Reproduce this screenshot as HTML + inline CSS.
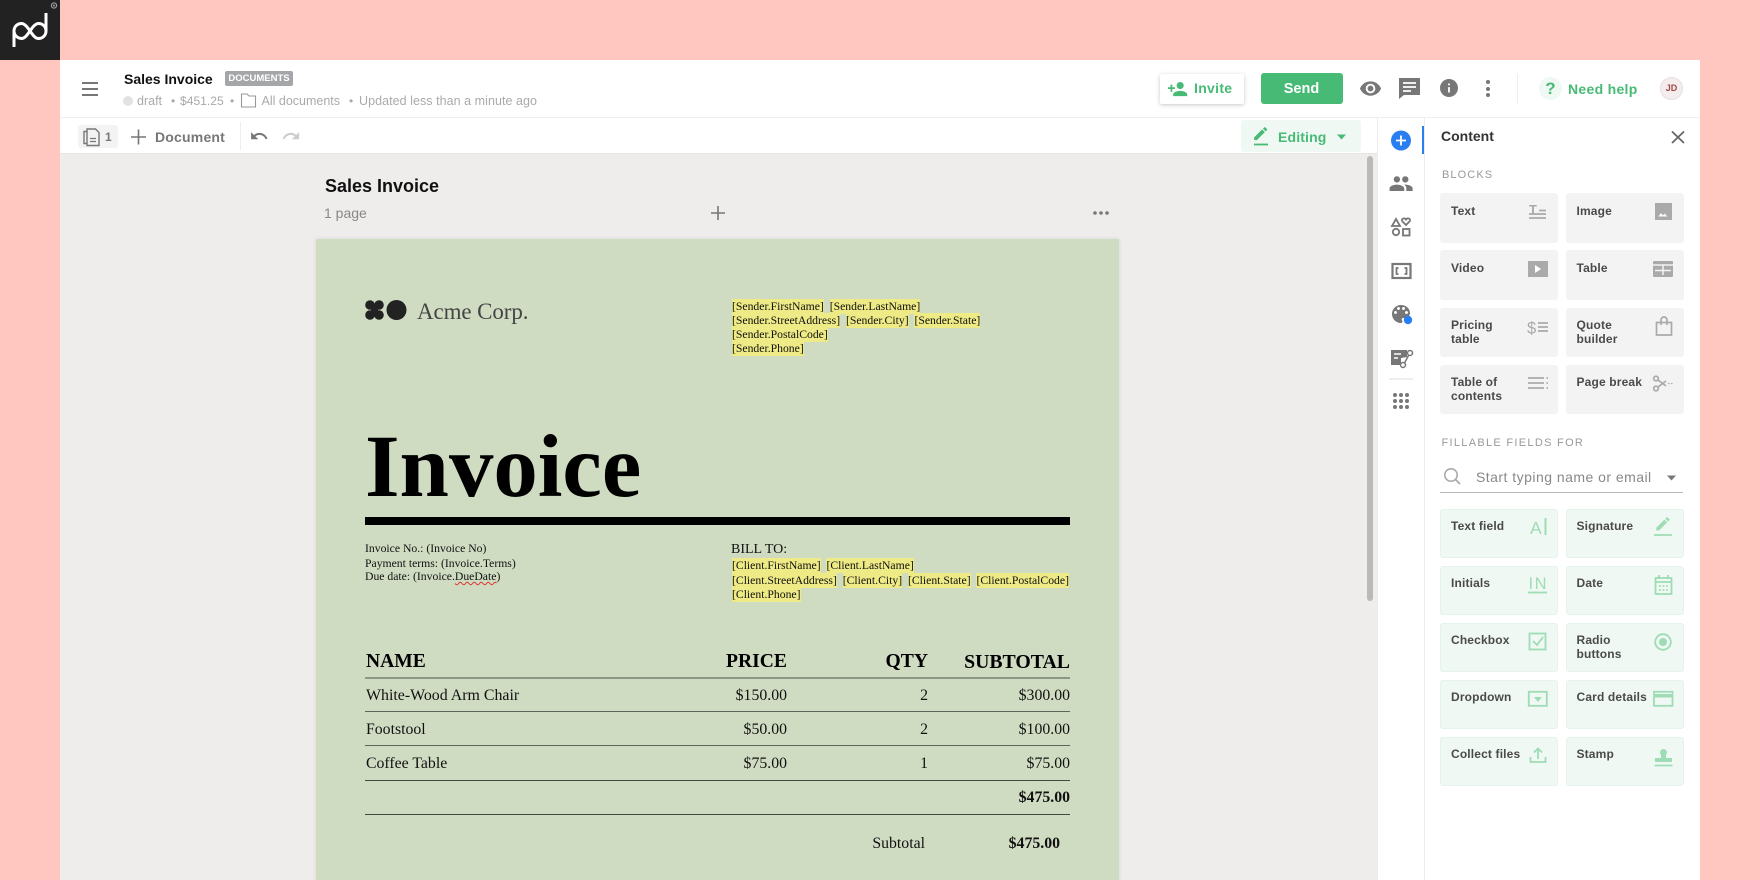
<!DOCTYPE html>
<html><head><meta charset="utf-8"><title>Sales Invoice</title>
<style>
html,body{margin:0;padding:0;width:1760px;height:880px;overflow:hidden;background:#ffc7bf;font-family:"Liberation Sans",sans-serif}
div,span.a{position:absolute;white-space:nowrap}
.t{line-height:14px;font-size:12px;font-weight:700;color:#4a4a4a;letter-spacing:.15px}
.b{background:#f3f3f3;border-radius:3px;width:118px}
.f{background:#eff8f3;box-shadow:inset 0 0 0 1px #e5f4eb;border-radius:3px;width:118px}
.s{font-family:"Liberation Serif",serif;color:#111}
.h{background:#eeea85;padding:1px 0}
.sl{font-size:11.7px;line-height:14px}
.r{font-size:15.8px;line-height:18px;text-align:right}
.rule{left:365px;width:705px;height:1px;background:#3f4a3c}
</style></head><body>
<div style="left:0;top:0;width:60px;height:60px;background:#222"></div>
<div style="left:60px;top:60px;width:1640px;height:820px;background:#fff"></div>
<div style="left:60px;top:154px;width:1317px;height:726px;background:#eeedeb"></div>
<div style="left:60px;top:117px;width:1640px;height:1px;background:#f0f0f0"></div>
<div style="left:60px;top:153px;width:1317px;height:1px;background:#e6e6e6"></div>
<div style="left:1377px;top:117px;width:1px;height:763px;background:#ececec"></div>
<div style="left:1424px;top:118px;width:1px;height:762px;background:#ececec"></div>
<div style="left:1367px;top:156px;width:6px;height:445px;background:#b9b9b7;border-radius:3px"></div>

<!-- header -->
<div style="left:124px;top:71px;font-size:14px;line-height:16px;font-weight:700;color:#111">Sales Invoice</div>
<div style="left:225px;top:71px;width:68px;height:15px;background:#a5a6aa;border-radius:2px;color:#fff;font-size:9.5px;font-weight:700;line-height:15px;text-align:center">DOCUMENTS</div>
<div style="left:123px;top:96px;width:10px;height:10px;border-radius:50%;background:#e2e2e2"></div>
<div style="left:137px;top:94px;font-size:12.5px;line-height:14px;color:#aaa">draft</div>
<div style="left:171px;top:94px;font-size:12px;line-height:14px;color:#aaa">•</div>
<div style="left:180px;top:94px;font-size:12.1px;line-height:14px;color:#aaa">$451.25</div>
<div style="left:230px;top:94px;font-size:12px;line-height:14px;color:#aaa">•</div>
<div style="left:261.500px;top:94px;font-size:12.5px;line-height:14px;color:#aaa">All documents</div>
<div style="left:349px;top:94px;font-size:12px;line-height:14px;color:#aaa">•</div>
<div style="left:359px;top:94px;font-size:12.5px;line-height:14px;color:#aaa;letter-spacing:.05px">Updated less than a minute ago</div>

<!-- toolbar -->
<div style="left:78px;top:125px;width:40px;height:23px;background:#f3f3f3;border-radius:3px"></div>
<div style="left:105px;top:130px;font-size:12px;line-height:14px;font-weight:700;color:#777">1</div>
<div style="left:155px;top:129px;font-size:14px;line-height:16px;font-weight:700;color:#777;letter-spacing:.2px">Document</div>
<div style="left:240px;top:122px;width:1px;height:28px;background:#eee"></div>

<!-- right header -->
<div style="left:1160px;top:74px;width:84px;height:30px;background:#fff;border-radius:2px;box-shadow:0 1px 4px rgba(0,0,0,.22)"></div>
<div style="left:1194px;top:80px;font-size:14px;line-height:16px;font-weight:700;color:#47ba75;letter-spacing:.3px">Invite</div>
<div style="left:1260.500px;top:73px;width:82px;height:31px;background:#47ba75;border-radius:3px;color:#fff;font-size:14.500px;font-weight:700;line-height:33px;text-align:center">Send</div>
<div style="left:1517px;top:74px;width:1px;height:29px;background:#eee"></div>
<div style="left:1539px;top:77px;width:23px;height:23px;background:#eff8f3;border-radius:50%;color:#47ba75;font-size:17px;font-weight:700;line-height:23px;text-align:center">?</div>
<div style="left:1568px;top:81px;font-size:14px;line-height:16px;font-weight:700;color:#47ba75;letter-spacing:.3px">Need help</div>
<div style="left:1660px;top:77px;width:23px;height:23px;background:#f5eded;box-shadow:inset 0 0 0 1px #e4e0e0;border-radius:50%;color:#9c4a4a;font-size:9px;font-weight:700;line-height:23px;text-align:center">JD</div>
<div style="left:1241px;top:120px;width:120px;height:32px;background:#eff8f3;border-radius:3px"></div>
<div style="left:1278px;top:129px;font-size:14px;line-height:16px;font-weight:700;color:#47ba75;letter-spacing:.15px">Editing</div>

<!-- doc heading -->
<div style="left:325px;top:175px;font-size:18px;line-height:22px;font-weight:700;color:#111">Sales Invoice</div>
<div style="left:324px;top:205px;font-size:14px;line-height:16px;color:#888">1 page</div>

<!-- page -->
<div style="left:315.500px;top:239px;width:803.500px;height:641px;background:#d0dcc2;box-shadow:0 0 4px rgba(0,0,0,.1)"></div>
<div style="left:417px;top:298px;font-family:'Liberation Serif',serif;font-size:23px;line-height:28px;color:#444;letter-spacing:-.1px">Acme Corp.</div>

<div class="s sl" style="left:732px;top:300px"><span class="h">[Sender.FirstName]</span>&nbsp; <span class="h">[Sender.LastName]</span></div>
<div class="s sl" style="left:732px;top:314px"><span class="h">[Sender.StreetAddress]</span>&nbsp; <span class="h">[Sender.City]</span>&nbsp; <span class="h">[Sender.State]</span></div>
<div class="s sl" style="left:732px;top:328px"><span class="h">[Sender.PostalCode]</span></div>
<div class="s sl" style="left:732px;top:342px"><span class="h">[Sender.Phone]</span></div>

<div style="left:365px;top:417px;font-family:'Liberation Serif',serif;font-size:88.800px;line-height:100px;font-weight:700;color:#000">Invoice</div>
<div style="left:365px;top:517px;width:705px;height:8px;background:#000"></div>

<div class="s sl" style="left:365px;top:542px">Invoice No.: (Invoice No)</div>
<div class="s sl" style="left:365px;top:556.500px">Payment terms: (Invoice.Terms)</div>
<div class="s sl" style="left:365px;top:570px">Due date: (Invoice.<span style="text-decoration:underline wavy #d33;text-decoration-thickness:1px">DueDate</span>)</div>

<div class="s" style="left:731px;top:541.500px;font-size:14px;line-height:16px">BILL TO:</div>
<div class="s sl" style="left:732px;top:559px"><span class="h">[Client.FirstName]</span>&nbsp; <span class="h">[Client.LastName]</span></div>
<div class="s sl" style="left:732px;top:573.500px"><span class="h">[Client.StreetAddress]</span>&nbsp; <span class="h">[Client.City]</span>&nbsp; <span class="h">[Client.State]</span>&nbsp; <span class="h">[Client.PostalCode]</span></div>
<div class="s sl" style="left:732px;top:587.500px"><span class="h">[Client.Phone]</span></div>

<div class="s" style="left:366px;top:651px;font-size:19.600px;line-height:22px;font-weight:700;color:#000">NAME</div>
<div class="s" style="left:587px;width:200px;text-align:right;top:651px;font-size:19.600px;line-height:22px;font-weight:700;color:#000">PRICE</div>
<div class="s" style="left:728px;width:200px;text-align:right;top:651px;font-size:19.600px;line-height:22px;font-weight:700;color:#000">QTY</div>
<div class="s" style="left:870px;width:200px;text-align:right;top:651px;font-size:19.800px;line-height:22px;font-weight:700;color:#000">SUBTOTAL</div>
<div class="rule" style="top:677px;height:2px;background:#8c9683"></div>
<div class="rule" style="top:711px;background:#5c6656"></div>
<div class="rule" style="top:745px;background:#5c6656"></div>
<div class="rule" style="top:780px"></div>
<div class="rule" style="top:814px"></div>

<div class="s r" style="left:366px;top:687px;font-size:15.9px">White-Wood Arm Chair</div>
<div class="s r" style="left:587px;width:200px;top:687px">$150.00</div>
<div class="s r" style="left:728px;width:200px;top:687px">2</div>
<div class="s r" style="left:870px;width:200px;top:687px">$300.00</div>
<div class="s r" style="left:366px;top:721px">Footstool</div>
<div class="s r" style="left:587px;width:200px;top:721px">$50.00</div>
<div class="s r" style="left:728px;width:200px;top:721px">2</div>
<div class="s r" style="left:870px;width:200px;top:721px">$100.00</div>
<div class="s r" style="left:366px;top:755px">Coffee Table</div>
<div class="s r" style="left:587px;width:200px;top:755px">$75.00</div>
<div class="s r" style="left:728px;width:200px;top:755px">1</div>
<div class="s r" style="left:870px;width:200px;top:755px">$75.00</div>
<div class="s r" style="left:870px;width:200px;top:789px;font-weight:700">$475.00</div>
<div class="s r" style="left:725px;width:200px;top:835px">Subtotal</div>
<div class="s r" style="left:860px;width:200px;top:835px;font-weight:700">$475.00</div>

<!-- panel -->
<div style="left:1441px;top:128px;font-size:14px;line-height:16px;font-weight:700;color:#333">Content</div>
<div style="left:1442px;top:167.500px;font-size:11px;line-height:14px;color:#999;letter-spacing:1.100px">BLOCKS</div>
<div style="left:1441.500px;top:436px;font-size:11px;line-height:14px;color:#999;letter-spacing:1.300px">FILLABLE FIELDS FOR</div>
<div style="left:1476px;top:469px;font-size:14px;line-height:16px;color:#888;letter-spacing:.47px">Start typing name or email</div>
<div style="left:1440px;top:491.500px;width:243px;height:1px;background:#bbb"></div>

<div class="b" style="left:1440px;top:193px;height:50px"></div><div class="b" style="left:1566px;top:193px;height:50px"></div>
<div class="b" style="left:1440px;top:250px;height:50px"></div><div class="b" style="left:1566px;top:250px;height:50px"></div>
<div class="b" style="left:1440px;top:308px;height:49px"></div><div class="b" style="left:1566px;top:308px;height:49px"></div>
<div class="b" style="left:1440px;top:365px;height:49px"></div><div class="b" style="left:1566px;top:365px;height:49px"></div>
<div class="t" style="left:1451px;top:203.500px">Text</div><div class="t" style="left:1576.500px;top:203.500px">Image</div>
<div class="t" style="left:1451px;top:260.500px">Video</div><div class="t" style="left:1576.500px;top:260.500px">Table</div>
<div class="t" style="left:1451px;top:318px">Pricing<br>table</div><div class="t" style="left:1576.500px;top:318px">Quote<br>builder</div>
<div class="t" style="left:1451px;top:375px">Table of<br>contents</div><div class="t" style="left:1576.500px;top:375px">Page break</div>

<div class="f" style="left:1440px;top:509px;height:49px"></div><div class="f" style="left:1566px;top:509px;height:49px"></div>
<div class="f" style="left:1440px;top:566px;height:49px"></div><div class="f" style="left:1566px;top:566px;height:49px"></div>
<div class="f" style="left:1440px;top:623px;height:49px"></div><div class="f" style="left:1566px;top:623px;height:49px"></div>
<div class="f" style="left:1440px;top:680px;height:49px"></div><div class="f" style="left:1566px;top:680px;height:49px"></div>
<div class="f" style="left:1440px;top:737px;height:49px"></div><div class="f" style="left:1566px;top:737px;height:49px"></div>
<div class="t" style="left:1451px;top:519px">Text field</div><div class="t" style="left:1576.500px;top:519px">Signature</div>
<div class="t" style="left:1451px;top:576px">Initials</div><div class="t" style="left:1576.500px;top:576px">Date</div>
<div class="t" style="left:1451px;top:633px">Checkbox</div><div class="t" style="left:1576.500px;top:633px">Radio<br>buttons</div>
<div class="t" style="left:1451px;top:690px">Dropdown</div><div class="t" style="left:1576.500px;top:690px">Card details</div>
<div class="t" style="left:1451px;top:747px">Collect files</div><div class="t" style="left:1576.500px;top:747px">Stamp</div>

<svg width="1760" height="880" viewBox="0 0 1760 880" style="position:absolute;left:0;top:0" fill="none">
<!-- logo -->
<g stroke="#fff" stroke-width="3">
<path d="M14 47V31C14 26 18 23.500 21.500 23.500C28 23.500 32 38.500 38.500 38.500C42.500 38.500 46 35.500 46 31V13"/>
<path d="M14 31C14 35.500 18 38.500 21.500 38.500C28 38.500 32 23.500 38.500 23.500C42.500 23.500 46 26.500 46 31"/>
</g>
<circle cx="54" cy="5.500" r="2.600" stroke="#aaa"/><circle cx="54" cy="5.500" r="1" fill="#aaa"/>
<!-- hamburger -->
<path d="M82 83h16M82 89h16M82 95h16" stroke="#777" stroke-width="2"/>
<!-- folder -->
<path d="M241.500 94V107H255.500V96H249L247 94Z" stroke="#999" stroke-width="1.100"/>
<!-- page icon -->
<path d="M87 137.500V129H95.500L99 132.500V145.500H87ZM87 131.500H84V143.500H87" stroke="#777" stroke-width="1.400"/><path d="M90 138.500h6M90 141.500h6" stroke="#777" stroke-width="1.200"/>
<!-- plus -->
<path d="M131 137h15M138.500 129.500v15" stroke="#777" stroke-width="1.600"/>
<g fill="#777" transform="translate(249.500 126.500) scale(.8)"><path d="M12.500 8c-2.650 0-5.050.99-6.900 2.600L2 7v9h9l-3.620-3.620c1.390-1.160 3.160-1.880 5.120-1.880 3.540 0 6.550 2.310 7.600 5.500l2.370-.78C21.080 11.030 17.150 8 12.500 8z"/></g>
<g fill="#ccc" transform="translate(281.500 126.500) scale(.8)"><path d="M18.400 10.600C16.550 8.990 14.150 8 11.500 8c-4.650 0-8.580 3.030-9.960 7.220L3.900 16c1.050-3.190 4.050-5.500 7.600-5.500 1.950 0 3.730.72 5.120 1.880L13 16h9V7l-3.600 3.600z"/></g>
<!-- invite -->
<g fill="#47ba75" transform="translate(1167 78.500) scale(.88)"><path d="M15 12c2.210 0 4-1.790 4-4s-1.790-4-4-4-4 1.790-4 4 1.790 4 4 4zm-9-2V7H4v3H1v2h3v3h2v-3h3v-2H6zm9 4c-2.670 0-8 1.340-8 4v2h16v-2c0-2.660-5.330-4-8-4z"/></g>
<!-- eye -->
<g fill="#777" transform="translate(1359 77) scale(.96)"><path fill-rule="evenodd" d="M12 4.500C7 4.500 2.730 7.610 1 12c1.730 4.390 6 7.500 11 7.500s9.270-3.110 11-7.500c-1.730-4.390-6-7.500-11-7.500zM12 17c-2.760 0-5-2.240-5-5s2.240-5 5-5 5 2.240 5 5-2.240 5-5 5zm0-8c-1.660 0-3 1.340-3 3s1.340 3 3 3 3-1.340 3-3-1.340-3-3-3z"/></g>
<!-- comment -->
<path d="M1399 78H1420V95H1404L1399 99Z" fill="#777"/><path d="M1403 83h13M1403 87h13M1403 91h8" stroke="#fff" stroke-width="1.700"/>
<!-- info -->
<g fill="#777" transform="translate(1438.200 77.200) scale(.9)"><path fill-rule="evenodd" d="M12 2C6.480 2 2 6.480 2 12s4.480 10 10 10 10-4.480 10-10S17.520 2 12 2zm1 15h-2v-6h2v6zm0-8h-2V7h2v2z"/></g>
<!-- dots -->
<circle cx="1488" cy="82" r="2" fill="#777"/><circle cx="1488" cy="89" r="2" fill="#777"/><circle cx="1488" cy="95" r="2" fill="#777"/>
<!-- editing -->
<g fill="#47ba75" transform="translate(1252 125) scale(.72)"><path d="M3 17.250V21h3.750L17.810 9.940l-3.750-3.750L3 17.250zM20.710 7.040a.996.996 0 000-1.410l-2.340-2.340a.996.996 0 00-1.410 0l-1.830 1.830 3.750 3.750 1.830-1.830z"/></g>
<path d="M1254 144.500h14" stroke="#47ba75" stroke-width="1.800"/>
<path d="M1337 134.500h9l-4.500 5z" fill="#47ba75"/>
<!-- doc +, dots -->
<path d="M711 213h14M718 206v14" stroke="#777" stroke-width="1.600"/>
<circle cx="1095" cy="213" r="1.800" fill="#777"/><circle cx="1101" cy="213" r="1.800" fill="#777"/><circle cx="1107" cy="213" r="1.800" fill="#777"/>
<!-- nav -->
<path d="M1422 126h2v28h-2z" fill="#2a7ff0"/>
<circle cx="1401" cy="140.500" r="10" fill="#2a7ff0"/><path d="M1396 140.500h10M1401 135.500v10" stroke="#fff" stroke-width="1.800"/>
<g fill="#777" transform="translate(1388.500 171) scale(1.050)"><path d="M16 11c1.660 0 2.990-1.340 2.990-3S17.660 5 16 5c-1.660 0-3 1.340-3 3s1.340 3 3 3zm-8 0c1.660 0 2.990-1.340 2.990-3S9.660 5 8 5C6.340 5 5 6.340 5 8s1.340 3 3 3zm0 2c-2.330 0-7 1.170-7 3.500V19h14v-2.500c0-2.330-4.670-3.500-7-3.500zm8 0c-.29 0-.62.02-.97.05 1.160.84 1.970 1.970 1.970 3.450V19h6v-2.500c0-2.330-4.670-3.500-7-3.500z"/></g>
<g stroke="#777" stroke-width="1.800">
<path d="M1396 219l4 7h-8z"/><path d="M1406 225l-3.500-3.500c-2-2.500 1.800-4.500 3.500-2 1.700-2.500 5.500-.5 3.500 2z"/>
<circle cx="1396" cy="232" r="3.200"/><rect x="1403" y="229" width="6.500" height="6.500"/>
<rect x="1392.500" y="264" width="18" height="14" stroke-width="2.200"/>
<path d="M1398.500 268h-2v6h2M1404.500 268h2v6h-2" stroke-width="1.800"/>
</g>
<g transform="translate(1389 302)" fill="#777"><path fill-rule="evenodd" d="M12 3c-4.970 0-9 4.030-9 9s4.030 9 9 9c.83 0 1.500-.67 1.500-1.500 0-.39-.15-.74-.39-1.010-.23-.26-.38-.61-.38-.99 0-.83.67-1.500 1.500-1.500H16c2.760 0 5-2.240 5-5 0-4.420-4.030-8-9-8zm-5.500 9c-.83 0-1.500-.67-1.500-1.500S5.670 9 6.500 9 8 9.670 8 10.500 7.330 12 6.500 12zm3-4C8.670 8 8 7.330 8 6.500S8.670 5 9.500 5s1.500.67 1.500 1.500S10.330 8 9.500 8zm5 0c-.83 0-1.500-.67-1.500-1.500S13.670 5 14.500 5s1.500.67 1.500 1.500S15.330 8 14.500 8zm3 4c-.83 0-1.500-.67-1.500-1.500S16.670 9 17.500 9s1.500.67 1.500 1.500-.67 1.500-1.500 1.500z"/></g>
<circle cx="1408" cy="320" r="4.200" fill="#2a7ff0"/>
<path d="M1391 350H1407V357L1401 358V365H1391Z" fill="#777"/>
<path d="M1394 354h7M1394 358h4" stroke="#fff" stroke-width="1.400"/>
<g stroke="#777" stroke-width="1.500"><circle cx="1410" cy="353" r="2.500"/><circle cx="1403" cy="365" r="2.500"/><path d="M1408.500 355.500L1404.500 363"/></g>
<path d="M1389 379h24" stroke="#e8e8e8" stroke-width="1.500"/>
<g fill="#777"><circle cx="1395" cy="395" r="2"/><circle cx="1401" cy="395" r="2"/><circle cx="1407" cy="395" r="2"/><circle cx="1395" cy="401" r="2"/><circle cx="1401" cy="401" r="2"/><circle cx="1407" cy="401" r="2"/><circle cx="1395" cy="407" r="2"/><circle cx="1401" cy="407" r="2"/><circle cx="1407" cy="407" r="2"/></g>
<!-- close -->
<path d="M1672 131.500L1684 143M1684 131.500L1672 143" stroke="#666" stroke-width="1.800"/>
<!-- search -->
<circle cx="1451" cy="475" r="6.200" stroke="#aaa" stroke-width="1.600"/><path d="M1455.500 479.500l4.500 4.500" stroke="#aaa" stroke-width="1.800"/>
<path d="M1667 475.500h9l-4.500 5z" fill="#777"/>
<!-- acme logo -->
<g fill="#222"><circle cx="370" cy="305" r="4.800"/><circle cx="379" cy="305" r="4.800"/><circle cx="370" cy="315" r="4.800"/><circle cx="379" cy="315" r="4.800"/><rect x="371" y="306" width="7" height="8"/><circle cx="396.500" cy="310" r="10"/></g>
<!-- block icons -->
<text x="1529" y="214" font-family="Liberation Sans, sans-serif" font-size="13" font-weight="700" fill="#aaa">T</text>
<path d="M1539 210.500h7M1529 214h17M1529 218h17" stroke="#aaa" stroke-width="1.700"/>
<rect x="1655" y="203" width="17" height="17" fill="#aaa"/><path d="M1658.500 216.500l2.500-3.500 2 2.500 1.500-2 3 3z" fill="#fff"/>
<rect x="1528" y="261" width="20" height="16" fill="#aaa"/><path d="M1535 265l6 4-6 4z" fill="#fff"/>
<rect x="1653" y="261" width="20" height="16" fill="#aaa" rx="1"/><path d="M1653 265h20M1655 270.500h16M1663 265v10" stroke="#f3f3f3" stroke-width="1.500"/>
<text x="1527" y="333.500" font-family="Liberation Sans, sans-serif" font-size="16.500" fill="#aaa">$</text>
<path d="M1538 323h10M1538 327h10M1538 331h10" stroke="#aaa" stroke-width="1.800"/>
<path d="M1656.500 322.500h15v12.500h-15zM1661 325v-5a3 3 0 016 0v5" stroke="#aaa" stroke-width="1.700"/>
<path d="M1528 378h16M1528 383h16M1528 388h16M1546.500 378h1.500M1546.500 383h1.500M1546.500 388h1.500" stroke="#aaa" stroke-width="1.700"/>
<g stroke="#aaa" stroke-width="1.700"><circle cx="1656" cy="378.500" r="2.300"/><circle cx="1656" cy="388.500" r="2.300"/><path d="M1658 380l8 6M1658 387l8-6"/><path d="M1668 383.500h1.500M1671 383.500h1.500" stroke-width="1.300"/></g>
<!-- field icons -->
<text x="1530" y="534" font-family="Liberation Sans, sans-serif" font-size="17.500" fill="#9edcb6">A</text>
<path d="M1545.500 518v17" stroke="#9edcb6" stroke-width="2"/>
<g fill="#9edcb6" transform="translate(1654 515) scale(.74)"><path d="M3 17.250V21h3.750L17.810 9.940l-3.750-3.750L3 17.250zM20.710 7.040a.996.996 0 000-1.410l-2.340-2.340a.996.996 0 00-1.410 0l-1.830 1.830 3.750 3.750 1.830-1.830z"/></g>
<path d="M1654 535h18" stroke="#9edcb6" stroke-width="1.800"/>
<text x="1528.500" y="589" font-family="Liberation Sans, sans-serif" font-size="16.500" letter-spacing="1.500" fill="#9edcb6">IN</text>
<path d="M1528 592.500h19" stroke="#9edcb6" stroke-width="1.800"/>
<g stroke="#9edcb6" stroke-width="1.800"><rect x="1655.500" y="578" width="16" height="16"/><path d="M1659 575v4M1668 575v4M1655 582h17"/><path d="M1659 586h9M1659 590h9" stroke-dasharray="1.800 1.800"/></g>
<rect x="1529.500" y="633.500" width="16" height="16" stroke="#9edcb6" stroke-width="1.800"/><path d="M1533 641l4 4 6-8" stroke="#9edcb6" stroke-width="1.800"/>
<circle cx="1663" cy="642" r="7.800" stroke="#9edcb6" stroke-width="1.800"/><circle cx="1663" cy="642" r="4" fill="#9edcb6"/>
<rect x="1528.800" y="691.800" width="18" height="14" stroke="#9edcb6" stroke-width="1.800"/><path d="M1534 697h8l-4 5z" fill="#9edcb6"/>
<rect x="1654" y="691.800" width="18.500" height="14" stroke="#9edcb6" stroke-width="1.800"/><rect x="1654" y="694" width="18.500" height="3.500" fill="#9edcb6"/>
<path d="M1530.500 757v5h15v-5M1538 759v-10M1534 752.500l4-4 4 4" stroke="#9edcb6" stroke-width="1.800"/>
<path d="M1655 762h17v-4h-6v-3c2-2.500 .5-6-2.500-6s-4.500 3.500-2.500 6v3h-6z" fill="#9edcb6"/><path d="M1654.500 765.500h18" stroke="#9edcb6" stroke-width="1.800"/>
</svg>
</body></html>
